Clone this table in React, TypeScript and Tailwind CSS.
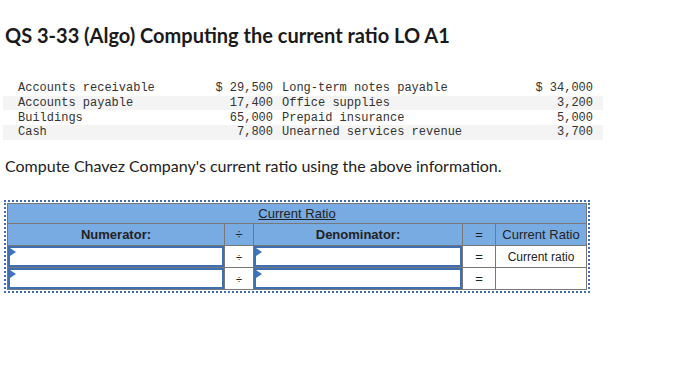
const rows = [
  ["Accounts receivable", "$ 29,500", "Long-term notes payable", "$ 34,000"],
  ["Accounts payable", "17,400", "Office supplies", "3,200"],
  ["Buildings", "65,000", "Prepaid insurance", "5,000"],
  ["Cash", "7,800", "Unearned services revenue", "3,700"],
];

function Flag() {
  return (
    <span className="absolute left-0 top-0 h-0 w-0 border-y-[4px] border-l-[6px] border-y-transparent border-l-[#3f73bd]" />
  );
}

function InputCell() {
  return (
    <td className="border border-[#777] p-0">
      <div className="relative h-[21px] border-2 border-[#3d6fb2] bg-white">
        <Flag />
      </div>
    </td>
  );
}

export default function App() {
  return (
    <div className="min-h-[368px] w-[681px] bg-white px-[5px] pt-[23px] text-[#222]" style={{ fontFamily: "Lato, 'Open Sans', sans-serif" }}>
      <h1 className="text-[20px] font-bold leading-[24px] text-[#1a1a1a]">
        QS 3-33 (Algo) Computing the current ratio LO A1
      </h1>

      <div
        className="ml-[-2px] mt-[34px] w-[600px] text-[12px] text-[#333]"
        style={{ fontFamily: "'Liberation Mono', 'DejaVu Sans Mono', monospace" }}
      >
        {rows.map((r, i) => (
          <div
            key={r[0]}
            className={`grid h-[14.7px] grid-cols-[182px_73px_1fr_auto] items-center pl-[15px] pr-[10px] leading-[14px] ${i % 2 ? "bg-[#f4f4f4]" : ""}`}
          >
            <span className="whitespace-pre">{r[0]}</span>
            <span className="whitespace-pre text-right">{r[1]}</span>
            <span className="whitespace-pre pl-[9px]">{r[2]}</span>
            <span className="whitespace-pre text-right">{r[3]}</span>
          </div>
        ))}
      </div>

      <p className="mt-[17px] text-[16px] leading-[18px] text-[#222]">
        Compute Chavez Company's current ratio using the above information.
      </p>

      <div className="mt-[25px] ml-[-1px] w-[586px] border-2 border-dotted border-[#3d6fb2] p-px">
        <table
          className="w-full table-fixed border-collapse text-[13px] text-[#222]"
          style={{ fontFamily: "'Liberation Sans', Arial, sans-serif" }}
        >
          <colgroup>
            <col className="w-[217px]" />
            <col className="w-[29px]" />
            <col className="w-[209px]" />
            <col className="w-[33px]" />
            <col />
          </colgroup>
          <tbody>
            <tr className="h-[20px] bg-[#79abe3]">
              <td colSpan={5} className="border border-[#777] p-0 text-center">
                <span className="underline">Current Ratio</span>
              </td>
            </tr>
            <tr className="h-[22px] bg-[#79abe3]">
              <td className="border border-[#777] p-0 text-center font-bold">Numerator:</td>
              <td className="border border-[#777] p-0 text-center">÷</td>
              <td className="border border-[#777] p-0 text-center font-bold">Denominator:</td>
              <td className="border border-[#777] p-0 text-center">=</td>
              <td className="border border-[#777] p-0 text-center">Current Ratio</td>
            </tr>
            <tr className="bg-white">
              <InputCell />
              <td className="border border-[#777] p-0 text-center text-[11px]">÷</td>
              <InputCell />
              <td className="border border-[#777] p-0 text-center">=</td>
              <td className="border border-[#777] p-0 text-center text-[12px]">Current ratio</td>
            </tr>
            <tr className="bg-white">
              <InputCell />
              <td className="border border-[#777] p-0 text-center text-[11px]">÷</td>
              <InputCell />
              <td className="border border-[#777] p-0 text-center">=</td>
              <td className="border border-[#777] p-0 text-center text-[12px]"></td>
            </tr>
          </tbody>
        </table>
      </div>
    </div>
  );
}
